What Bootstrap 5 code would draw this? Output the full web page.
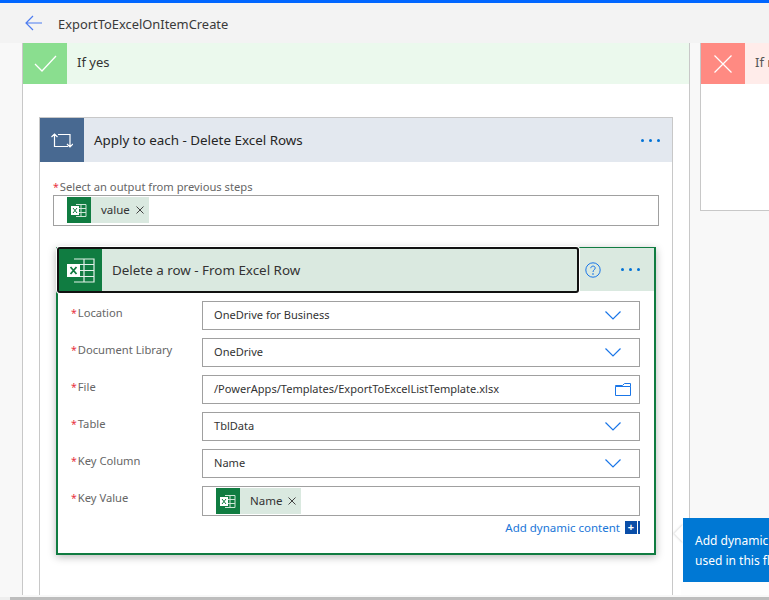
<!DOCTYPE html>
<html lang="en"><head><meta charset="utf-8"><title>ExportToExcelOnItemCreate</title>
<link href="https://cdn.jsdelivr.net/npm/bootstrap@5.3.0/dist/css/bootstrap.min.css" rel="stylesheet">
<style>
html,body{height:100%;overflow:hidden}
body{font-family:"Noto Sans","Open Sans",sans-serif;background:#f8f8f8;color:#333;width:769px;height:600px;position:relative}
.topline{height:3px;background:#0066ff}
.appbar{height:40px;background:#f3f3f3;padding-left:25px;gap:16px}
.appbar .name{font-size:12.9px;color:#3a3a3a;padding-top:3px}
.canvas{height:552px;padding-left:22px;gap:10px;overflow:hidden}
.branch{flex:none;background:#fff;border:solid #c8c8c8;border-width:0 1px}
.yes{width:668px}
.no{width:100px;height:168px;border-width:0 0 1px 1px}
.branch-head{height:41px}
.yes .branch-head{background:#ebf9ed}
.no .branch-head{background:#ffecea}
.branch-icon{width:44px;height:41px}
.yes .branch-icon{background:#8ade8f}
.no .branch-icon{background:#ff8a82}
.branch-head span{font-size:13px;margin-left:10px;padding-bottom:2px}
.no .branch-head span{color:#555}
.loop{margin:33px 16px 0;height:500px;border:1px solid #c8c8c8;border-bottom:0;width:634px}
.loop-head{height:44px;background:#e3e8ef}
.loop-icon{width:44px;height:44px;background:#486991}
.title{font-size:13.4px;margin-left:10px;color:#252525}
.dots{gap:5px}
.dots i{display:block;width:3px;height:3px;border-radius:50%;background:#0072d6}
.loop-body{padding:18px 13px 0}
.lab{font-size:11.2px;color:#666;line-height:14px}
.lab b{color:#e8313f;font-weight:400;margin-right:1px;font-size:10.5px}
.token-box{height:31px;border:1px solid #a0a0a0;padding:1px 13px;margin-top:1px;background:#fff}
.token{height:26px;background:#dae9e0;font-size:11.5px;color:#333}
.token-ico{width:24px;height:26px;background:#107c41}
.token-txt{padding:0 5px 1px 10px;gap:6px}
.token-txt svg{margin-top:1px}
.action{width:600px;height:308px;margin:21px 0 0 3px;border:2px solid #107c41;box-shadow:0 2px 8px rgba(0,0,0,.28);background:#fff}
.action-head{height:43px;background:#dae9e0;margin:-1px 0 0 -1px}
.focused{width:522px;height:46px;margin-top:-1px;border:2px solid #111;border-radius:3px;background:#dae9e0;box-shadow:0 0 0 1px #fff}
.action-ico{width:43px;height:42px;background:#107c41}
.help{margin-left:6px}
.rows{padding:10px 0 0 13px;gap:8px}
.row-f{height:29px}
.row-f .lab{width:131px;flex:none;padding-top:5px}
.ctrl{width:438px;height:100%;border:1px solid #a0a0a0;font-size:11.05px;color:#333;padding:0 8px 0 11px;background:#fff}
.ctrl .chev{margin-right:10px}
.ctrl.tall{height:30px;padding:1px 13px}
.add{font-size:11.5px;color:#1a76d8;width:582px;margin-top:4px;gap:5px}
.plus{width:12px;height:13px;background:#0a4ea8;color:#fff;font-size:11px;line-height:12px;text-align:center;font-weight:700}
.plus-bar{width:2px;height:13px;background:#0a4ea8;margin-left:-4px}
.tip{position:absolute;left:683px;top:518px;width:86px;height:64px;background:#0078d4;color:#fff;font-size:12px;line-height:20px;padding:13px 0 0 12px;white-space:nowrap;overflow:hidden}
.beak{position:absolute;left:677px;top:527px;width:13px;height:13px;background:#fff;transform:rotate(45deg);box-shadow:-1px 1px 2px rgba(0,0,0,.12)}
.under{position:absolute;left:681px;top:582px;width:88px;height:13px;background:#fdfdfd}
.sb{height:5px;background:#eee}
.sb div{height:3px;margin:2px 0 0 10px;background:#bdbdbd}
</style></head><body>
<div class="topline"></div>
<div class="appbar d-flex align-items-center">
<svg width="17" height="16" viewBox="0 0 17 16" fill="none" stroke="#4d7cf0" stroke-width="1.2"><path d="M17 8H1M8 1 1 8l7 7"/></svg>
<span class="name">ExportToExcelOnItemCreate</span></div>
<div class="canvas d-flex">
<div class="branch yes">
<div class="branch-head d-flex align-items-center">
<div class="branch-icon d-flex align-items-center justify-content-center"><svg width="23" height="17" viewBox="0 0 23 17" fill="none" stroke="#fff" stroke-width="1.3"><path d="M1 9l7 7L22 1"/></svg></div>
<span style="color:#333">If yes</span></div>
<div class="loop">
<div class="loop-head d-flex align-items-center">
<div class="loop-icon d-flex align-items-center justify-content-center"><svg width="22" height="15" viewBox="0 0 22 15" fill="none" stroke="#fff" stroke-width="1.2"><path d="M.5 4l3-3 3 3M3.500 1v12.500H17M7 1.500h12V14M16 11l3 3 3-3"/></svg></div>
<span class="title">Apply to each - Delete Excel Rows</span>
<div class="dots d-flex ms-auto" style="margin-right:12px"><i></i><i></i><i></i></div></div>
<div class="loop-body">
<div class="lab"><b>*</b>Select an output from previous steps</div>
<div class="token-box d-flex"><div class="token d-flex align-items-center">
<div class="token-ico d-flex align-items-center justify-content-center"><svg width="16" height="15" viewBox="0 0 16 15"><g fill="none" stroke="#cfe6d8"><path d="M5 1.500h10v12H5M10 1.500v12M5 5.500h10M5 9.500h10"/></g><rect y="3" width="8" height="9" fill="#fff"/><path d="M2 5l4 5M6 5l-4 5" stroke="#107c41"/></svg></div>
<div class="token-txt d-flex align-items-center"><span>value</span><svg width="8" height="8" viewBox="0 0 8 8" stroke="#444"><path d="M.5.500l7 7M7.500.500l-7 7"/></svg></div></div></div>
<div class="action">
<div class="action-head d-flex">
<div class="focused d-flex align-items-center">
<div class="action-ico d-flex align-items-center justify-content-center"><svg width="28" height="25" viewBox="0 0 28 25"><g fill="none" stroke="#e3f1e9" stroke-width="1.2"><path d="M7 1h20v23H7M17 1v23M7 6.500h20M7 12.500h20M7 18.500h20"/></g><rect y="6" width="13" height="13" fill="#fff"/><path d="M3.500 9l6 7M9.500 9l-6 7" stroke="#107c41" stroke-width="1.800"/></svg></div>
<span class="title" style="color:#333">Delete a row - From Excel Row</span></div>
<div class="d-flex align-items-center flex-grow-1">
<svg class="help" width="16" height="16" viewBox="0 0 16 16" fill="none" stroke="#1a76e8"><circle cx="8" cy="8" r="7.200"/><path d="M5.800 6.200C5.800 3.400 10.200 3.400 10.200 6 10.200 7.800 8 7.800 8 10"/><circle cx="8" cy="12" r=".4"/></svg>
<div class="dots d-flex ms-auto" style="margin-right:14px"><i></i><i></i><i></i></div></div>
</div>
<div class="rows d-flex flex-column">
<div class="row-f d-flex"><div class="lab"><b>*</b>Location</div><div class="ctrl d-flex align-items-center justify-content-between"><span>OneDrive for Business</span><svg class="chev" width="16" height="9" viewBox="0 0 16 9" fill="none" stroke="#1a76e8" stroke-width="1.2"><path d="M.5.500 8 8 15.500.500"/></svg></div></div>
<div class="row-f d-flex"><div class="lab"><b>*</b>Document Library</div><div class="ctrl d-flex align-items-center justify-content-between"><span>OneDrive</span><svg class="chev" width="16" height="9" viewBox="0 0 16 9" fill="none" stroke="#1a76e8" stroke-width="1.2"><path d="M.5.500 8 8 15.500.500"/></svg></div></div>
<div class="row-f d-flex"><div class="lab"><b>*</b>File</div><div class="ctrl d-flex align-items-center justify-content-between"><span>/PowerApps/Templates/ExportToExcelListTemplate.xlsx</span><svg width="16" height="13" viewBox="0 0 16 13" fill="none" stroke="#1a76e8"><path d="M.5 3.500h15v9H.5zM.5 3.500v-1h7l2-2h6v3"/></svg></div></div>
<div class="row-f d-flex"><div class="lab"><b>*</b>Table</div><div class="ctrl d-flex align-items-center justify-content-between"><span>TblData</span><svg class="chev" width="16" height="9" viewBox="0 0 16 9" fill="none" stroke="#1a76e8" stroke-width="1.2"><path d="M.5.500 8 8 15.500.500"/></svg></div></div>
<div class="row-f d-flex"><div class="lab"><b>*</b>Key Column</div><div class="ctrl d-flex align-items-center justify-content-between"><span>Name</span><svg class="chev" width="16" height="9" viewBox="0 0 16 9" fill="none" stroke="#1a76e8" stroke-width="1.2"><path d="M.5.500 8 8 15.500.500"/></svg></div></div>
<div class="row-f d-flex"><div class="lab"><b>*</b>Key Value</div><div class="ctrl tall d-flex"><div class="token d-flex align-items-center">
<div class="token-ico d-flex align-items-center justify-content-center"><svg width="16" height="15" viewBox="0 0 16 15"><g fill="none" stroke="#cfe6d8"><path d="M5 1.500h10v12H5M10 1.500v12M5 5.500h10M5 9.500h10"/></g><rect y="3" width="8" height="9" fill="#fff"/><path d="M2 5l4 5M6 5l-4 5" stroke="#107c41"/></svg></div>
<div class="token-txt d-flex align-items-center"><span>Name</span><svg width="8" height="8" viewBox="0 0 8 8" stroke="#444"><path d="M.5.500l7 7M7.500.500l-7 7"/></svg></div></div></div></div>
</div>
<div class="add d-flex align-items-center justify-content-end"><span>Add dynamic content</span><div class="plus">+</div><div class="plus-bar"></div></div>
</div></div></div></div>
<div class="branch no">
<div class="branch-head d-flex align-items-center">
<div class="branch-icon d-flex align-items-center justify-content-center"><svg width="18" height="18" viewBox="0 0 18 18" stroke="#fff" stroke-width="1.200"><path d="M.5.500l17 17M17.500.500l-17 17"/></svg></div>
<span>If no</span></div></div>
</div>
<div class="sb"><div></div></div>
<div class="under"></div><div class="beak"></div>
<div class="tip">Add dynamic content<br>used in this flow</div>
</body></html>
